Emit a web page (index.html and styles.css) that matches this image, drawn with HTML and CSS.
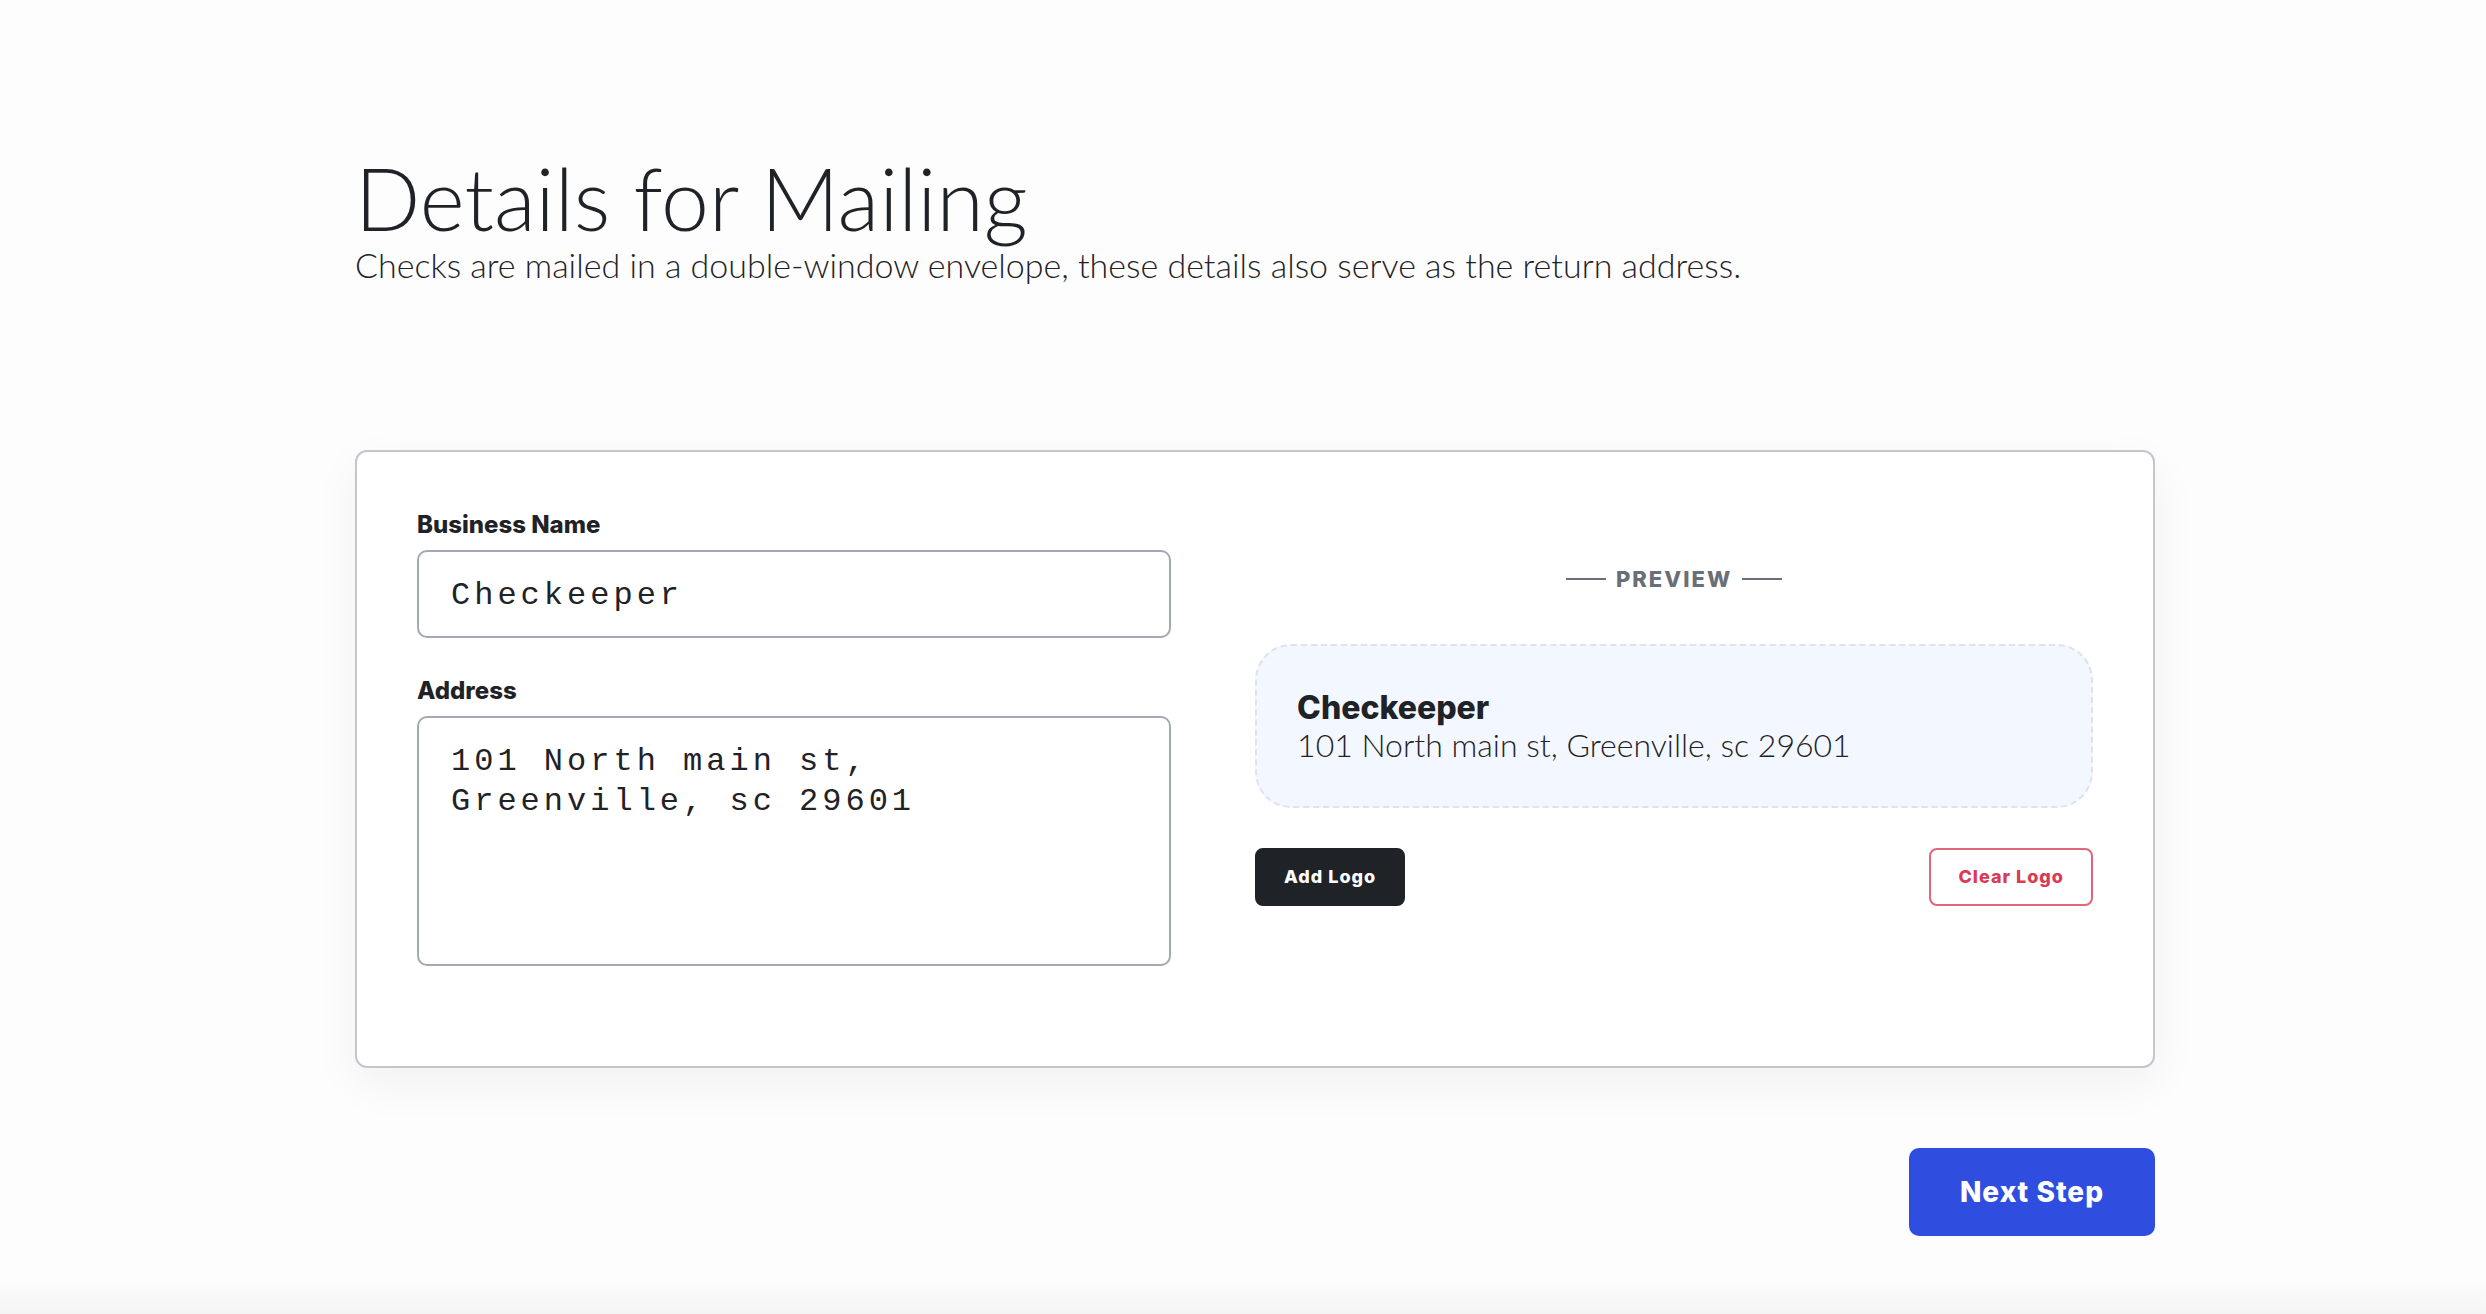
FILE: index.html
```html
<!DOCTYPE html>
<html lang="en">
<head>
<meta charset="utf-8">
<meta name="viewport" content="width=device-width, initial-scale=1">
<title>Details for Mailing</title>
<link rel="stylesheet" href="styles.css">
</head>
<body>
<main class="page">
  <header class="intro">
    <h1 class="title">Details for Mailing</h1>
    <p class="lead">Checks are mailed in a double-window envelope, these details also serve as the return address.</p>
  </header>
  <form class="form">
    <div class="card">
      <div class="fields">
        <label class="label" for="business">Business Name</label>
        <input class="control" id="business" type="text" value="Checkeeper">
        <label class="label" for="address">Address</label>
        <textarea class="control control-area" id="address">101 North main st,
Greenville, sc 29601</textarea>
      </div>
      <section class="preview">
        <h2 class="preview-title">Preview</h2>
        <div class="preview-box">
          <strong class="preview-name">Checkeeper</strong>
          <span>101 North main st, Greenville, sc 29601</span>
        </div>
        <div class="logo-actions">
          <button class="btn btn-dark" type="button">Add Logo</button>
          <button class="btn btn-danger" type="button">Clear Logo</button>
        </div>
      </section>
    </div>
    <button class="btn btn-next" type="submit">Next Step</button>
  </form>
</main>
<div class="page-fade"></div>
</body>
</html>
```
FILE: styles.css
```css
* {
  box-sizing: border-box;
}

body {
  display: flex;
  flex-direction: column;
  min-height: 100vh;
  margin: 0;
  padding-left: 24px;
  background: #fdfdfd;
  color: #1f2226;
  font-family: Lato, sans-serif;
  font-size: 32px;
  font-weight: 300;
  line-height: 40px;
}

.page {
  flex: 1;
  width: 100%;
  max-width: 1800px;
  margin: 0 auto;
  padding-top: 160px;
}

.intro {
  margin-bottom: 164px;
}

.title {
  margin: 0 0 8px;
  font-size: 86px;
  font-weight: 300;
  line-height: 76px;
}

.lead {
  margin: 0;
  font-size: 34px;
  line-height: 42px;
}

.form {
  display: flex;
  flex-direction: column;
}

.card {
  display: grid;
  grid-template-columns: 9fr 10fr;
  column-gap: 84px;
  padding: 60px 60px 100px;
  border: 2px solid #c3c7cc;
  border-radius: 12px;
  background: #fff;
  box-shadow: 0 16px 48px rgba(20, 20, 30, 0.05);
}

.fields {
  display: flex;
  flex-direction: column;
}

.label {
  margin-bottom: 12px;
  font-family: Inter, sans-serif;
  font-size: 24px;
  font-weight: 800;
  line-height: 26px;
}

.control {
  width: 100%;
  height: 88px;
  margin-bottom: 40px;
  padding: 2px 32px 0;
  border: 2px solid #a3a8b5;
  border-radius: 10px;
  background: #fff;
  color: inherit;
  font-family: "Liberation Mono", monospace;
  font-size: 32px;
  letter-spacing: 4px;
}

.control-area {
  height: 250px;
  margin-bottom: 0;
  padding: 24px 32px;
  line-height: 40px;
  resize: none;
}

.preview-title {
  display: flex;
  align-items: center;
  justify-content: center;
  gap: 10px;
  margin: 54px 0 52px;
  color: #6a6f77;
  font-family: Inter, sans-serif;
  font-size: 22px;
  font-weight: 800;
  letter-spacing: 2px;
  line-height: 26px;
  text-transform: uppercase;
}

.preview-title::before,
.preview-title::after {
  width: 40px;
  height: 2px;
  background: currentColor;
  content: "";
}

.preview-box {
  display: flex;
  flex-direction: column;
  padding: 44px 40px 42px;
  border: 2px dashed #dfe2e8;
  border-radius: 36px;
  background: #f3f7ff;
  line-height: 38px;
}

.preview-name {
  font-family: Inter, sans-serif;
  font-weight: 800;
  line-height: 36px;
}

.logo-actions {
  display: flex;
  justify-content: space-between;
  margin-top: 40px;
}

.btn {
  padding: 0 27px;
  border: 2px solid transparent;
  border-radius: 8px;
  font-family: Inter, sans-serif;
  font-size: 18px;
  font-weight: 800;
  letter-spacing: 1px;
  line-height: 54px;
}

.btn-dark {
  border-color: #1f2226;
  background: #1f2226;
  color: #fff;
}

.btn-danger {
  border-color: #e0667a;
  background: #fff;
  color: #d93a54;
}

.btn-next {
  align-self: flex-end;
  margin-top: 80px;
  padding: 0 49px;
  border-radius: 10px;
  border-color: #2f4ddf;
  background: #2f4ddf;
  color: #fff;
  font-size: 28px;
  line-height: 84px;
}

.page-fade {
  height: 36px;
  margin-left: -24px;
  background: linear-gradient(#fdfdfd, #f4f4f4);
}
```
